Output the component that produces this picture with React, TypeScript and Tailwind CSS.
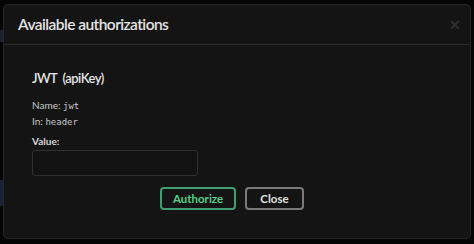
export default function App() {
  return (
    <div className="relative h-[244px] w-[474px] overflow-hidden bg-[#050505] pl-[3px] pt-[4px] font-['Lato',sans-serif]">
      <div className="absolute left-0 top-[30px] h-[12px] w-[3px] bg-[#1b2330]" />
      <div className="absolute left-0 top-[180px] h-[26px] w-[3px] bg-[#18233a]" />
      <div className="flex h-[235px] w-[468px] flex-col rounded-[5px] border border-[#262626] bg-[#141414]">
        <div className="flex h-[40px] shrink-0 items-center justify-between border-b border-[#2a2a2a] pl-[14px] pr-[9px]">
          <h3 className="text-[15.5px] font-semibold tracking-[-0.55px] text-[#e4e4e4]">Available authorizations</h3>
          <button className="text-[14px] font-bold leading-none text-[#2e2e2e]">✕</button>
        </div>
        <div className="flex flex-col pl-[28px] pt-[24px]">
          <h4 className="text-[13px] font-semibold leading-[18px] tracking-[-0.5px] text-[#e4e4e4]">JWT&nbsp;&nbsp;(apiKey)</h4>
          <p className="mt-[11px] text-[10px] leading-[15px] text-[#c8c8c8]">
            Name: <code className="font-['DejaVu_Sans_Mono',monospace] text-[9px]">jwt</code>
          </p>
          <p className="text-[10px] leading-[15px] text-[#c8c8c8]">
            In: <code className="font-['DejaVu_Sans_Mono',monospace] text-[9px]">header</code>
          </p>
          <label className="mt-[4px] text-[10px] font-bold leading-[14px] text-[#d8d8d8]">Value:</label>
          <input className="mt-[2px] h-[26px] w-[166px] rounded-[3px] border border-[#303030] bg-[#121212] outline-none" />
        </div>
        <div className="mt-[11px] flex justify-center gap-[9px] pr-[10px]">
          <button className="h-[23px] w-[76px] rounded-[4px] border-2 border-[#3f9e72] text-[11.5px] font-bold text-[#4fcf8e]">Authorize</button>
          <button className="h-[23px] w-[59px] rounded-[4px] border-2 border-[#7a7a7a] text-[11.5px] font-bold text-[#e0e0e0]">Close</button>
        </div>
      </div>
    </div>
  );
}
